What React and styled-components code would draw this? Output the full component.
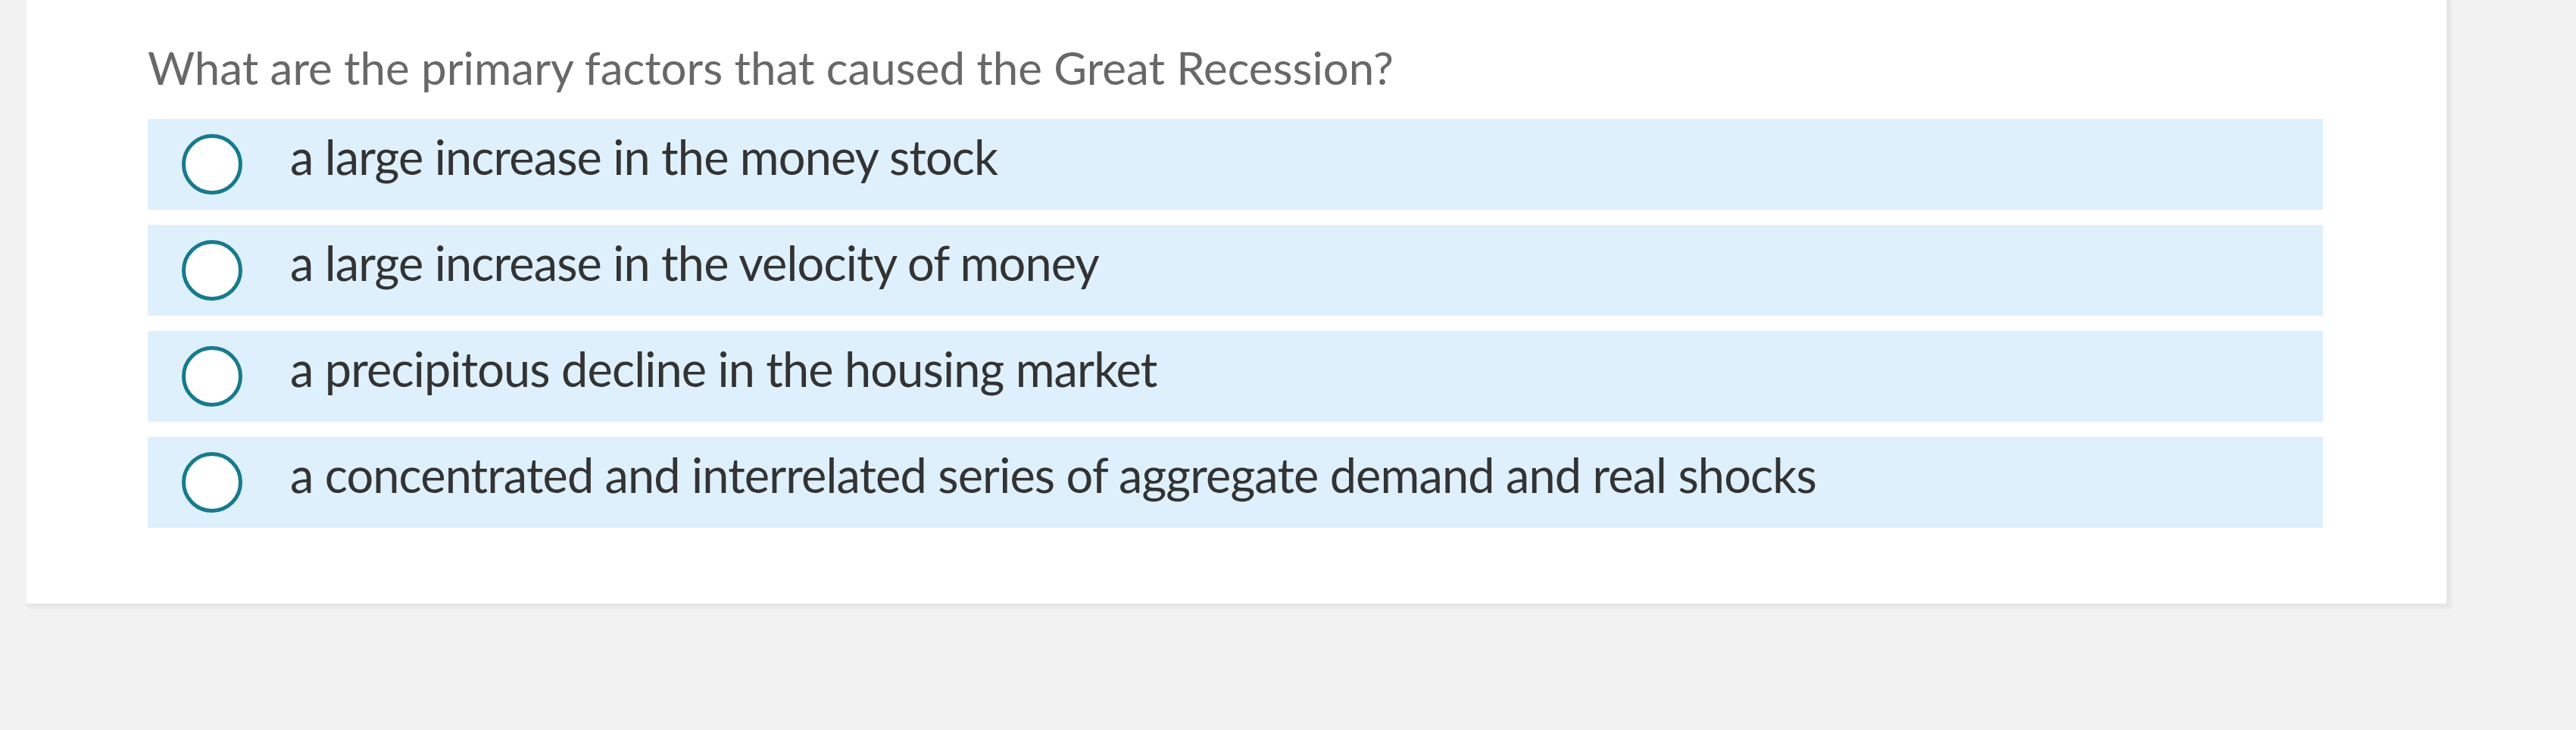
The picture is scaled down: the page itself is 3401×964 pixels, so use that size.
import React from "react";
import styled, { createGlobalStyle } from "styled-components";

const GlobalStyle = createGlobalStyle`
  html, body {
    margin: 0;
    padding: 0;
    background: #f2f2f2;
  }
  body {
    font-family: Lato, "Open Sans", sans-serif;
  }
`;

const Page = styled.div`
  min-height: 964px;
  padding-left: 35px;
`;

const Card = styled.div`
  width: 3199px;
  height: 801px;
  box-sizing: border-box;
  background: #ffffff;
  border-right: 4px solid #e6e6e6;
  border-bottom: 4px solid #e6e6e6;
  box-shadow: 3px 3px 3px rgba(0, 0, 0, 0.04);
  padding: 59px 0 0 160px;
`;

const Question = styled.div`
  font-size: 60px;
  line-height: 1;
  color: #686868;
  margin-bottom: 38px;
`;

const Options = styled.div`
  display: flex;
  flex-direction: column;
  gap: 20px;
  width: 2872px;
`;

const Option = styled.label`
  display: flex;
  align-items: center;
  height: 120px;
  padding-left: 45px;
  background: #dff0fd;
  cursor: pointer;
`;

const Radio = styled.span`
  flex: none;
  width: 80px;
  height: 80px;
  box-sizing: border-box;
  border-radius: 50%;
  border: 5px solid #167b8c;
  background: #ffffff;
`;

const Label = styled.span`
  margin-left: 63px;
  font-size: 63px;
  letter-spacing: -0.85px;
  line-height: 1;
  color: #333333;
  padding-bottom: 22px;
`;

const answers = [
  "a large increase in the money stock",
  "a large increase in the velocity of money",
  "a precipitous decline in the housing market",
  "a concentrated and interrelated series of aggregate demand and real shocks",
];

export default function App() {
  return (
    <>
      <GlobalStyle />
      <Page>
        <Card>
          <Question>What are the primary factors that caused the Great Recession?</Question>
          <Options>
            {answers.map((a) => (
              <Option key={a}>
                <Radio />
                <Label>{a}</Label>
              </Option>
            ))}
          </Options>
        </Card>
      </Page>
    </>
  );
}
